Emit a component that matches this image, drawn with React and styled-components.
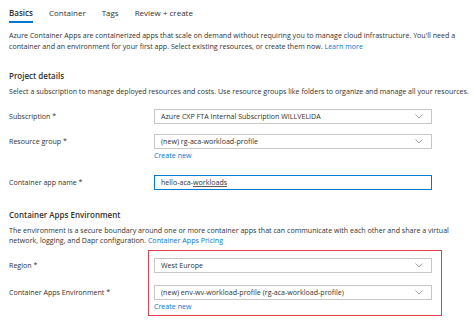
import React from "react";
import styled, { createGlobalStyle } from "styled-components";

const GlobalStyle = createGlobalStyle`
    body {
        margin: 0;
        background: #fff;
        font-family: "Open Sans", "Noto Sans", sans-serif;
        color: #323130;
    }
`;

const Page = styled.div`
    width: 474px;
    height: 324px;
    padding: 6px 0 0 9px;
    box-sizing: border-box;
    overflow: hidden;
    font-size: 7.1px;
`;

const Tabs = styled.div`
    display: flex;
    gap: 16px;
    height: 18px;
    font-size: 8px;
`;

const Tab = styled.div`
    position: relative;
    line-height: 14px;
    color: #323130;
    font-weight: ${(p) => (p.$active ? 600 : 400)};

    &::after {
        content: "";
        display: ${(p) => (p.$active ? "block" : "none")};
        height: 2px;
        background: #0078d4;
        margin-top: 1px;
    }
`;

const Text = styled.p`
    margin: ${(p) => p.$margin || "0"};
    line-height: 10.5px;
    width: 462px;
`;

const Link = styled.a`
    color: #0078d4;
    text-decoration: none;
`;

const Heading = styled.h3`
    margin: ${(p) => p.$margin || "0"};
    font-size: 8px;
    font-weight: 600;
    line-height: 12px;
`;

const Row = styled.div`
    display: flex;
    align-items: flex-start;
    margin-top: ${(p) => p.$top || 0}px;
`;

const Label = styled.div`
    width: 145px;
    flex: none;
    line-height: 15px;
`;

const Field = styled.div`
    width: 278px;
    display: flex;
    flex-direction: column;
`;

const Select = styled.div`
    height: 15px;
    border: 1px solid #c8c6c4;
    box-sizing: border-box;
    display: flex;
    align-items: center;
    justify-content: space-between;
    padding: 0 8px 0 6px;
    line-height: 13px;
    white-space: nowrap;
`;

const Input = styled.div`
    height: 15px;
    border: 1px solid #0078d4;
    box-sizing: border-box;
    display: flex;
    align-items: center;
    padding: 0 6px;
    line-height: 13px;
`;

const Squiggle = styled.span`
    text-decoration: underline;
    text-decoration-color: #605e5c;
    text-underline-offset: 1px;
`;

const CreateNew = styled(Link)`
    line-height: 11px;
    margin-top: 1px;
`;

const EnvBlock = styled.div`
    position: relative;
`;

const Highlight = styled.div`
    position: absolute;
    left: 139px;
    top: -8px;
    width: 294px;
    height: 66px;
    border: 1px solid #e3404f;
    box-sizing: border-box;
    pointer-events: none;
`;

const Chevron = () => (
    <svg width="8" height="5" viewBox="0 0 8 5" fill="none">
        <path d="M0.5 0.5 L4 4 L7.5 0.5" stroke="#8a8886" strokeWidth="0.8" />
    </svg>
);

const Dropdown = ({ children }) => (
    <Select>
        <span>{children}</span>
        <Chevron />
    </Select>
);

export default function App() {
    return (
        <>
            <GlobalStyle />
            <Page>
                <Tabs>
                    <Tab $active>Basics</Tab>
                    <Tab>Container</Tab>
                    <Tab>Tags</Tab>
                    <Tab>Review + create</Tab>
                </Tabs>
                <Text $margin="6px 0 0">
                    Azure Container Apps are containerized apps that scale on demand without requiring you to manage
                    cloud infrastructure. You'll need a container and an environment for your first app. Select existing
                    resources, or create them now. <Link>Learn more</Link>
                </Text>

                <Heading $margin="19px 0 0">Project details</Heading>
                <Text $margin="4px 0 0">
                    Select a subscription to manage deployed resources and costs. Use resource groups like folders to
                    organize and manage all your resources.
                </Text>

                <Row $top={12}>
                    <Label>Subscription *</Label>
                    <Field>
                        <Dropdown>Azure CXP FTA Internal Subscription WILLVELIDA</Dropdown>
                    </Field>
                </Row>
                <Row $top={10}>
                    <Label>Resource group *</Label>
                    <Field>
                        <Dropdown>(new) rg-aca-workload-profile</Dropdown>
                        <CreateNew>Create new</CreateNew>
                    </Field>
                </Row>
                <Row $top={14}>
                    <Label>Container app name *</Label>
                    <Field>
                        <Input>
                            hello-aca-<Squiggle>workloads</Squiggle>
                        </Input>
                    </Field>
                </Row>

                <Heading $margin="19px 0 0">Container Apps Environment</Heading>
                <Text $margin="4px 0 0">
                    The environment is a secure boundary around one or more container apps that can communicate with
                    each other and share a virtual network, logging, and Dapr configuration.{" "}
                    <Link>Container Apps Pricing</Link>
                </Text>

                <EnvBlock>
                    <Highlight />
                    <Row $top={12}>
                        <Label>Region *</Label>
                        <Field>
                            <Dropdown>West Europe</Dropdown>
                        </Field>
                    </Row>
                    <Row $top={12}>
                        <Label>Container Apps Environment *</Label>
                        <Field>
                            <Dropdown>(new) env-wv-workload-profile (rg-aca-workload-profile)</Dropdown>
                            <CreateNew>Create new</CreateNew>
                        </Field>
                    </Row>
                </EnvBlock>
            </Page>
        </>
    );
}
